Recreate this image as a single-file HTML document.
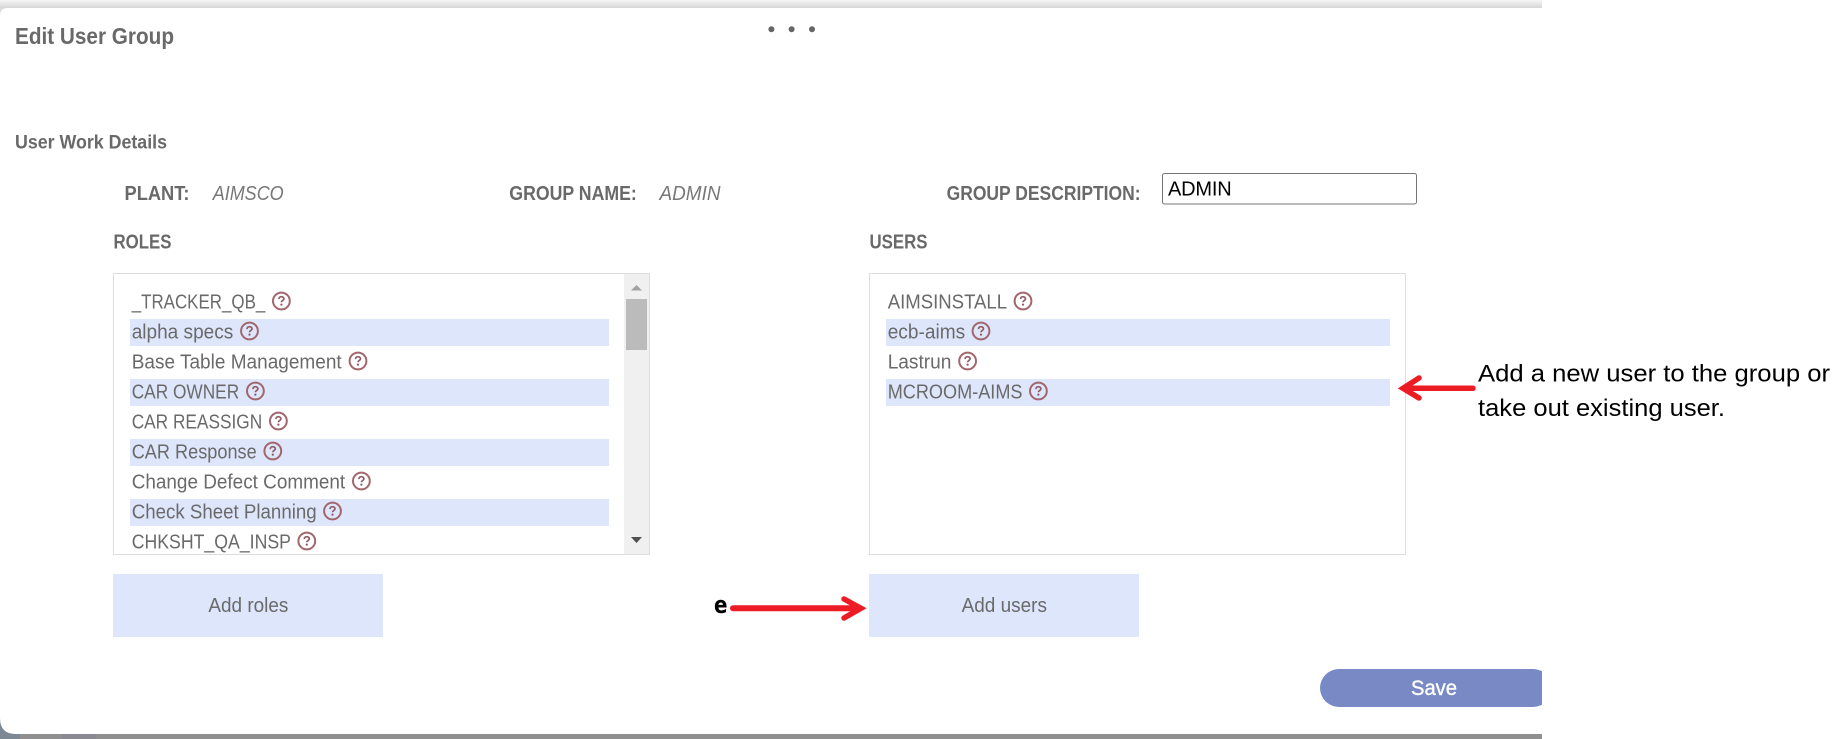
<!DOCTYPE html>
<html><head><meta charset="utf-8"><title>Edit User Group</title>
<style>
html,body{margin:0;padding:0;background:#fff;width:1848px;height:739px;overflow:hidden}
svg{display:block}
text{font-family:"Liberation Sans",Arial,sans-serif}
.h{font-weight:bold;fill:#696969}
.i{font-style:italic;fill:#777}
.l{font-size:20px;fill:#6a6a6a}
.s{fill:#dee6fc}
</style></head><body>
<svg width="1848" height="739" viewBox="0 0 1848 739" xmlns="http://www.w3.org/2000/svg">
<defs>
<linearGradient id="t" x1="0" y1="0" x2="0" y2="1"><stop offset="0" stop-color="#f6f6f6"/><stop offset="1" stop-color="#d6d6d6"/></linearGradient>
<g id="q"><circle r="8.4" fill="none" stroke="#a2666d" stroke-width="2"/><path d="M-2.5-1.9C-2.5-3.6-1.3-4.3-.1-4.3 1.4-4.3 2.5-3.4 2.5-2.1 2.5-.6 0-.5 0 1.3" fill="none" stroke="#8f5c63" stroke-width="1.7"/><circle cx="0" cy="3.6" r="1.1" fill="#8f5c63"/></g>
<clipPath id="c"><rect x="114" y="274" width="510" height="280"/></clipPath>
<clipPath id="sc"><rect x="1300" y="660" width="242" height="60"/></clipPath>
</defs>
<rect width="1848" height="739" fill="#fff"/>
<rect x="0" y="0" width="1542" height="8" fill="url(#t)"/>
<rect x="0" y="734" width="1542" height="5" fill="#8f8f8f"/>
<rect x="0" y="718" width="20" height="21" fill="#7c8894"/>
<rect x="62" y="734" width="34" height="5" fill="#8a8890"/>
<rect x="0" y="8" width="12" height="12" fill="#dcdcdc"/>
<path d="M8 8H1542V734H16Q0 734 0 718V16Q0 8 8 8Z" fill="#fff"/>

<text x="15" y="44" class="h" font-size="23" textLength="159" lengthAdjust="spacingAndGlyphs">Edit User Group</text>
<circle cx="771.4" cy="29.3" r="3" fill="#666"/><circle cx="791.6" cy="29.3" r="3" fill="#666"/><circle cx="812" cy="29.3" r="3" fill="#666"/>
<text x="15" y="148.5" class="h" font-size="19.5" textLength="152" lengthAdjust="spacingAndGlyphs">User Work Details</text>

<text x="124.5" y="200" class="h" font-size="20.5" textLength="65" lengthAdjust="spacingAndGlyphs">PLANT:</text>
<text x="212.7" y="200" class="i" font-size="20.5" textLength="71" lengthAdjust="spacingAndGlyphs">AIMSCO</text>
<text x="509.3" y="200" class="h" font-size="20.5" textLength="127.5" lengthAdjust="spacingAndGlyphs">GROUP NAME:</text>
<text x="659.5" y="200" class="i" font-size="20.5" textLength="61" lengthAdjust="spacingAndGlyphs">ADMIN</text>
<text x="946.6" y="200" class="h" font-size="20.5" textLength="194" lengthAdjust="spacingAndGlyphs">GROUP DESCRIPTION:</text>
<rect x="1162.5" y="173.5" width="254" height="30.5" rx="2" fill="#fff" stroke="#767676"/>
<text x="1168" y="195.7" font-size="20" fill="#000" textLength="63.7">ADMIN</text>

<text x="113.5" y="248.5" class="h" font-size="20" textLength="58" lengthAdjust="spacingAndGlyphs">ROLES</text>
<text x="869.5" y="248.5" class="h" font-size="20" textLength="58" lengthAdjust="spacingAndGlyphs">USERS</text>

<!-- roles -->
<rect x="113.5" y="273.5" width="536" height="281" fill="#fff" stroke="#ddd"/>
<rect x="624" y="274" width="25" height="280" fill="#f0f0f0"/>
<rect x="626" y="299" width="21" height="51" fill="#bbb"/>
<path d="M636.5 285L642 290.5H631Z" fill="#a3a3a3"/>
<path d="M631 537H642L636.5 543Z" fill="#505050"/>
<g clip-path="url(#c)">
<rect class="s" x="130" y="319" width="479" height="27"/>
<rect class="s" x="130" y="379" width="479" height="27"/>
<rect class="s" x="130" y="439" width="479" height="27"/>
<rect class="s" x="130" y="499" width="479" height="27"/>
<text class="l" x="131.7" y="308.5" textLength="133.6" lengthAdjust="spacingAndGlyphs">_TRACKER_QB_</text><use href="#q" x="281.4" y="301"/>
<text class="l" x="131.7" y="338.5" textLength="101.6" lengthAdjust="spacingAndGlyphs">alpha specs</text><use href="#q" x="249.5" y="331"/>
<text class="l" x="131.7" y="368.5" textLength="210" lengthAdjust="spacingAndGlyphs">Base Table Management</text><use href="#q" x="358" y="361"/>
<text class="l" x="131.7" y="398.5" textLength="107.5" lengthAdjust="spacingAndGlyphs">CAR OWNER</text><use href="#q" x="255.4" y="391"/>
<text class="l" x="131.7" y="428.5" textLength="130.5" lengthAdjust="spacingAndGlyphs">CAR REASSIGN</text><use href="#q" x="278.4" y="421"/>
<text class="l" x="131.7" y="458.5" textLength="125" lengthAdjust="spacingAndGlyphs">CAR Response</text><use href="#q" x="272.8" y="451"/>
<text class="l" x="131.7" y="488.5" textLength="213.5" lengthAdjust="spacingAndGlyphs">Change Defect Comment</text><use href="#q" x="361.4" y="481"/>
<text class="l" x="131.7" y="518.5" textLength="185" lengthAdjust="spacingAndGlyphs">Check Sheet Planning</text><use href="#q" x="332.5" y="511"/>
<text class="l" x="131.7" y="548.5" textLength="159.3" lengthAdjust="spacingAndGlyphs">CHKSHT_QA_INSP</text><use href="#q" x="306.8" y="541"/>
</g>

<!-- users -->
<rect x="869.5" y="273.5" width="536" height="281" fill="#fff" stroke="#ddd"/>
<rect class="s" x="886" y="319" width="504" height="27"/>
<rect class="s" x="886" y="379" width="504" height="27"/>
<text class="l" x="887.7" y="308.5" textLength="119.4" lengthAdjust="spacingAndGlyphs">AIMSINSTALL</text><use href="#q" x="1023" y="301"/>
<text class="l" x="887.7" y="338.5" textLength="77.5" lengthAdjust="spacingAndGlyphs">ecb-aims</text><use href="#q" x="981" y="331"/>
<text class="l" x="887.7" y="368.5" textLength="63.7" lengthAdjust="spacingAndGlyphs">Lastrun</text><use href="#q" x="967.6" y="361"/>
<text class="l" x="887.7" y="398.5" textLength="134.8" lengthAdjust="spacingAndGlyphs">MCROOM-AIMS</text><use href="#q" x="1038.4" y="391"/>

<!-- buttons -->
<rect class="s" x="113" y="574" width="270" height="63"/>
<text class="l" x="208.4" y="612" textLength="80" lengthAdjust="spacingAndGlyphs">Add roles</text>
<rect class="s" x="869" y="574" width="270" height="63"/>
<text class="l" x="961.6" y="612" textLength="85.4" lengthAdjust="spacingAndGlyphs">Add users</text>

<g clip-path="url(#sc)"><rect x="1320" y="669" width="232" height="38" rx="19" fill="#7889c6"/></g>
<text x="1411" y="695" font-size="21.5" fill="#fff" stroke="#fff" stroke-width=".4" textLength="46" lengthAdjust="spacingAndGlyphs">Save</text>

<!-- annotations -->
<text x="714" y="613" font-size="24" font-weight="bold" fill="#000" style="font-family:'DejaVu Sans',sans-serif" textLength="13.5" lengthAdjust="spacingAndGlyphs">e</text>
<path d="M733 608.3H860" stroke="#ed1c24" stroke-width="6" stroke-linecap="round" fill="none"/>
<path d="M844 599L861 608.3 844 618" stroke="#ed1c24" stroke-width="5.5" stroke-linecap="round" fill="none"/>
<path d="M1473 388.3H1404" stroke="#ed1c24" stroke-width="5.5" stroke-linecap="round" fill="none"/>
<path d="M1419 378L1403 388.3 1419 398" stroke="#ed1c24" stroke-width="5.5" stroke-linecap="round" fill="none"/>
<text x="1478" y="381.7" font-size="24" fill="#000" textLength="352" lengthAdjust="spacingAndGlyphs">Add a new user to the group or</text>
<text x="1478" y="416" font-size="24" fill="#000" textLength="247" lengthAdjust="spacingAndGlyphs">take out existing user.</text>
</svg>
</body></html>
